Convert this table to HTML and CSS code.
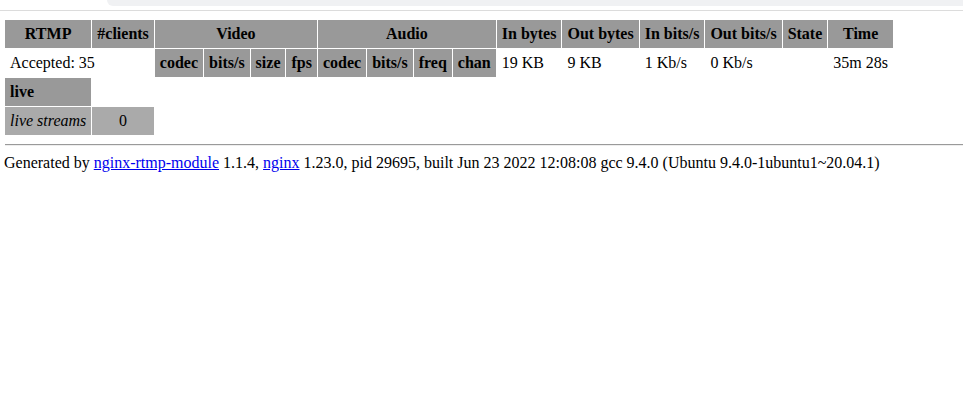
FILE: index.html
```html
<!DOCTYPE html>
<html>
<head>
<meta charset="utf-8">
<title>RTMP statistics</title>
<link rel="stylesheet" href="styles.css">
</head>
<body>
<div class="chrome"><div class="chrome-bar"></div></div>
<div class="page">
<table class="stats">
<tr class="hd">
<th>RTMP</th><th>#clients</th><th colspan="4">Video</th><th colspan="4">Audio</th><th>In bytes</th><th>Out bytes</th><th>In bits/s</th><th>Out bits/s</th><th>State</th><th>Time</th>
</tr>
<tr>
<td colspan="2">Accepted: 35</td>
<th class="g">codec</th><th class="g">bits/s</th><th class="g">size</th><th class="g">fps</th>
<th class="g">codec</th><th class="g">bits/s</th><th class="g">freq</th><th class="g">chan</th>
<td>19 KB</td><td>9 KB</td><td>1 Kb/s</td><td>0 Kb/s</td><td></td><td>35m 28s</td>
</tr>
<tr>
<td class="app"><b>live</b></td>
</tr>
<tr>
<td class="live"><i>live streams</i></td><td class="live center">0</td>
</tr>
</table>
<hr class="rule">
<div class="footer">Generated by <a href="#">nginx-rtmp-module</a> 1.1.4, <a href="#">nginx</a> 1.23.0, pid 29695, built Jun 23 2022 12:08:08 gcc 9.4.0 (Ubuntu 9.4.0-1ubuntu1~20.04.1)</div>
</div>
</body>
</html>
```
FILE: styles.css
```css
html, body {
  margin: 0;
  padding: 0;
  background: #fff;
  font-family: "Liberation Serif", "Times New Roman", serif;
  font-size: 16px;
  color: #000;
}
.chrome {
  height: 10px;
  border-bottom: 1px solid #dcdcdc;
}
.chrome-bar {
  margin-left: 107px;
  height: 6px;
  background: #f0f1f3;
  border-bottom-left-radius: 8px;
}
.page {
  padding: 8px 0 8px 4px;
}
.stats {
  border-collapse: separate;
  border-spacing: 1px;
}
.stats th, .stats td {
  padding: 5px;
  text-align: left;
}
.stats th {
  text-align: center;
  font-weight: bold;
}
.hd th, .g {
  background: #999999;
}
.app {
  background: #999999;
}
.live {
  background: #aaaaaa;
}
.center {
  text-align: center !important;
}
.rule {
  margin: 8px 0 8px 1px;
  border: 0;
  border-top: 1px solid #9a9a9a;
  border-bottom: 1px solid #eee;
}
.footer a {
  color: #0000ee;
}
```
